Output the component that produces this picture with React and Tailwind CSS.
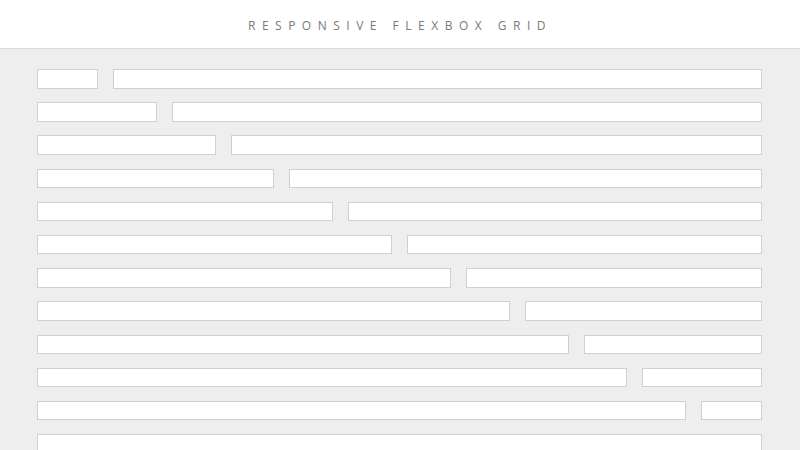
import React from "react";

const rows = [
  [1, 11],
  [2, 10],
  [3, 9],
  [4, 8],
  [5, 7],
  [6, 6],
  [7, 5],
  [8, 4],
  [9, 3],
  [10, 2],
  [11, 1],
  [12],
];

const grow = {
  1: "flex-[1_1_0%]",
  2: "flex-[2_2_0%]",
  3: "flex-[3_3_0%]",
  4: "flex-[4_4_0%]",
  5: "flex-[5_5_0%]",
  6: "flex-[6_6_0%]",
  7: "flex-[7_7_0%]",
  8: "flex-[8_8_0%]",
  9: "flex-[9_9_0%]",
  10: "flex-[10_10_0%]",
  11: "flex-[11_11_0%]",
  12: "flex-[12_12_0%]",
};

export default function App() {
  return (
    <div className="min-h-[450px] bg-[#eeeeee] font-['Open_Sans',sans-serif]">
      <header className="flex h-[49px] items-center justify-center border-b border-[#dcdcdc] bg-white pt-[4px]">
        <h1 className="text-[12px] font-normal tracking-[6.5px] text-[#7a7a7a]">
          RESPONSIVE FLEXBOX GRID
        </h1>
      </header>
      <main className="flex flex-col gap-[13.7px] px-[37px] pt-[20px] pr-[38px]">
        {rows.map((row, i) => (
          <div key={i} className="flex gap-[15px]">
            {row.map((n, j) => (
              <div
                key={j}
                className={`${grow[n]} h-[19.5px] border border-[#d0d0d0] bg-white`}
              />
            ))}
          </div>
        ))}
      </main>
    </div>
  );
}
